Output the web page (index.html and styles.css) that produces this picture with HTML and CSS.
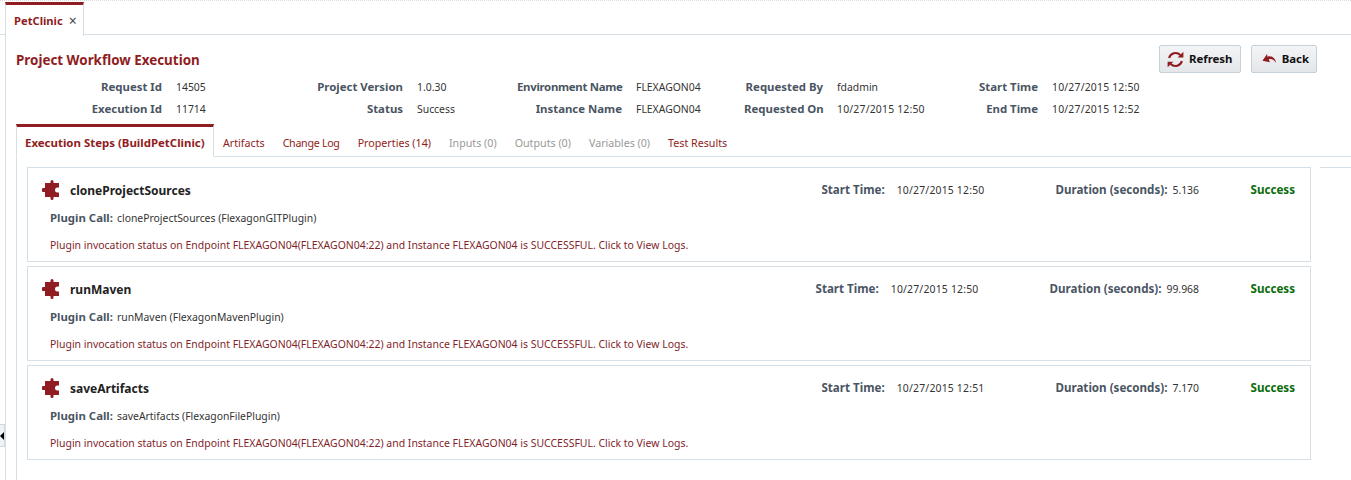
FILE: index.html
```html
<!DOCTYPE html>
<html lang="en">
<head>
<meta charset="utf-8">
<title>PetClinic</title>
<link rel="stylesheet" href="styles.css">
</head>
<body>
<div class="handle"><span class="handle-arrow"></span></div>
<nav class="top-tabs">
  <div class="top-tab"><span>PetClinic</span><span class="close">×</span></div>
</nav>
<main class="page">
  <header class="head">
    <h1>Project Workflow Execution</h1>
    <div class="actions">
      <button class="btn btn-refresh">
        <svg width="17" height="17" viewBox="0 0 16 16"><path d="M2 6.600A6.200 6.200 0 0 1 12.500 3.800" fill="none" stroke="#8f1d22" stroke-width="2"/><path d="M10 6h5.400V.6z" fill="#8f1d22"/><path d="M14 9.400A6.200 6.200 0 0 1 3.500 12.200" fill="none" stroke="#8f1d22" stroke-width="2"/><path d="M6 10H.6v5.400z" fill="#8f1d22"/></svg>
        Refresh
      </button>
      <button class="btn btn-back">
        <svg width="16" height="14" viewBox="0 0 16 14"><path d="M15.500 11.500C14.500 6 10.500 3 6 4.500L5.500 1.500.5 9l8 1.500-1-3.200c3-.8 5.800.8 8 4.200z" fill="#8f1d22"/></svg>
        Back
      </button>
    </div>
  </header>
  <section class="meta">
    <span class="k">Request Id</span><span class="v">14505</span>
    <span class="k">Project Version</span><span class="v">1.0.30</span>
    <span class="k tight">Environment Name</span><span class="v">FLEXAGON04</span>
    <span class="k">Requested By</span><span class="v">fdadmin</span>
    <span class="k">Start Time</span><span class="v date">10/27/2015 12:50</span>
    <span class="k">Execution Id</span><span class="v">11714</span>
    <span class="k">Status</span><span class="v">Success</span>
    <span class="k">Instance Name</span><span class="v">FLEXAGON04</span>
    <span class="k">Requested On</span><span class="v date">10/27/2015 12:50</span>
    <span class="k">End Time</span><span class="v date">10/27/2015 12:52</span>
  </section>
  <div class="tabs">
    <div class="tab active">Execution Steps (BuildPetClinic)</div>
    <div class="tab">Artifacts</div>
    <div class="tab tight">Change Log</div>
    <div class="tab">Properties (14)</div>
    <div class="tab off">Inputs (0)</div>
    <div class="tab off">Outputs (0)</div>
    <div class="tab off">Variables (0)</div>
    <div class="tab">Test Results</div>
  </div>
  <div class="tab-body">
    <article class="card">
      <div class="row-top">
        <svg class="puzzle" width="20" height="22" viewBox="0 0 20 22"><path d="M8.500 2.500a1.500 1.500 0 1 1 3 0V4H17v4.500h-1.500a2.500 2.500 0 0 0 0 5H17V18h-5.500v1.500a1.500 1.500 0 1 1-3 0V18H3v-5H1.500a2 2 0 0 1 0-4H3V4h5.500z" fill="#8f1d22"/></svg>
        <h2>cloneProjectSources</h2>
        <span class="k start">Start Time:</span><span class="v date time">10/27/2015 12:50</span>
        <span class="k">Duration (seconds):</span><span class="v">5.136</span>
        <span class="ok">Success</span>
      </div>
      <div class="row-call"><span class="k">Plugin Call:</span><span class="v">cloneProjectSources (FlexagonGITPlugin)</span></div>
      <div class="row-msg">Plugin invocation status on Endpoint FLEXAGON04(FLEXAGON04:22) and Instance FLEXAGON04 is SUCCESSFUL. Click to View Logs.</div>
    </article>
    <article class="card">
      <div class="row-top">
        <svg class="puzzle" width="20" height="22" viewBox="0 0 20 22"><path d="M8.500 2.500a1.500 1.500 0 1 1 3 0V4H17v4.500h-1.500a2.500 2.500 0 0 0 0 5H17V18h-5.500v1.500a1.500 1.500 0 1 1-3 0V18H3v-5H1.500a2 2 0 0 1 0-4H3V4h5.500z" fill="#8f1d22"/></svg>
        <h2>runMaven</h2>
        <span class="k start">Start Time:</span><span class="v date time">10/27/2015 12:50</span>
        <span class="k">Duration (seconds):</span><span class="v">99.968</span>
        <span class="ok">Success</span>
      </div>
      <div class="row-call"><span class="k">Plugin Call:</span><span class="v">runMaven (FlexagonMavenPlugin)</span></div>
      <div class="row-msg">Plugin invocation status on Endpoint FLEXAGON04(FLEXAGON04:22) and Instance FLEXAGON04 is SUCCESSFUL. Click to View Logs.</div>
    </article>
    <article class="card">
      <div class="row-top">
        <svg class="puzzle" width="20" height="22" viewBox="0 0 20 22"><path d="M8.500 2.500a1.500 1.500 0 1 1 3 0V4H17v4.500h-1.500a2.500 2.500 0 0 0 0 5H17V18h-5.500v1.500a1.500 1.500 0 1 1-3 0V18H3v-5H1.500a2 2 0 0 1 0-4H3V4h5.500z" fill="#8f1d22"/></svg>
        <h2>saveArtifacts</h2>
        <span class="k start">Start Time:</span><span class="v date time">10/27/2015 12:51</span>
        <span class="k">Duration (seconds):</span><span class="v">7.170</span>
        <span class="ok">Success</span>
      </div>
      <div class="row-call"><span class="k">Plugin Call:</span><span class="v">saveArtifacts (FlexagonFilePlugin)</span></div>
      <div class="row-msg">Plugin invocation status on Endpoint FLEXAGON04(FLEXAGON04:22) and Instance FLEXAGON04 is SUCCESSFUL. Click to View Logs.</div>
    </article>
  </div>
</main>
</body>
</html>
```
FILE: styles.css
```css
* { box-sizing: border-box; }
html, body { height: 480px; overflow: hidden; }
body {
  margin: 0;
  background: #fff;
  color: #333;
  font: 10.5px/14px "Noto Sans", sans-serif;
  position: relative;
}
.handle {
  position: absolute;
  left: 0;
  top: 424px;
  width: 5px;
  height: 23px;
  background: #f0f2f4;
  border: 1px solid #d0d8df;
  border-left: 0;
}
.handle-arrow {
  position: absolute;
  left: 0;
  top: 7px;
  border: 4px solid transparent;
  border-left: 0;
  border-right-color: #000;
}
.top-tabs {
  display: flex;
  height: 35px;
  padding-left: 5px;
  border-top: 1px dotted #ddd;
  border-bottom: 1px solid #d6dfe6;
}
.top-tab {
  width: 79px;
  height: 34px;
  margin-top: 1px;
  display: flex;
  align-items: center;
  gap: 6px;
  padding: 1px 0 0 8px;
  background: #fff;
  border-top: 3px solid #8f1d22;
  border-left: 1px solid #d6dfe6;
  border-right: 1px solid #d6dfe6;
  color: #8f1d22;
  font-size: 11.2px;
  font-weight: 700;
}
.close { color: #444; font-size: 14px; font-weight: 400; }
.page {
  height: 445px;
  margin-left: 5px;
  padding: 0 0 0 10px;
  border-left: 1px solid #d6dfe6;
}
.head {
  display: flex;
  justify-content: space-between;
  align-items: flex-start;
  height: 45px;
  padding: 10px 34px 0 0;
}
h1 {
  margin: 6px 0 0;
  color: #8f1d22;
  font-size: 13.4px;
  line-height: 18px;
  font-weight: 700;
}
.actions { display: flex; gap: 10px; }
.btn {
  height: 28px;
  display: flex;
  align-items: center;
  gap: 5px;
  padding: 0 7px;
  font: 700 11.4px/14px "Noto Sans", sans-serif;
  color: #111;
  background: linear-gradient(#f2f4f5, #e4e7ea);
  border: 1px solid #c5d0d9;
  border-radius: 2px;
}
.btn-refresh { width: 82px; }
.btn-back { width: 66px; padding-left: 10px; }
.meta {
  display: grid;
  grid-template-columns: 146px 112px 101px 86px 105px 94px 79px 127px 60px 98px;
  grid-auto-rows: 14px;
  column-gap: 14px;
  row-gap: 8px;
  align-content: start;
  height: 44px;
}
.meta .k { text-align: right; }
.meta .tight { letter-spacing: -.3px; }
.k { color: #4a5563; font-size: 11.4px; font-weight: 700; white-space: nowrap; }
.v { color: #333; font-size: 10.4px; white-space: nowrap; }
.date { letter-spacing: .2px; }
.tabs {
  display: flex;
  height: 33px;
  border-bottom: 1px solid #d6dfe6;
}
.tab {
  height: 32px;
  padding: 12px 9px 0;
  color: #8f1d22;
  font-size: 10.7px;
  white-space: nowrap;
}
.tab.tight { letter-spacing: -.3px; }
.tab.off { color: #999; }
.tab.active {
  height: 33px;
  width: 198px;
  padding: 9px 0 0 8px;
  font-size: 11.45px;
  font-weight: 700;
  background: #fff;
  border-top: 3px solid #8f1d22;
  border-left: 1px solid #d6dfe6;
  border-right: 1px solid #d6dfe6;
  border-bottom: 1px solid #fff;
}
.tab-body {
  height: 323px;
  padding: 10px 40px 0 10px;
  border-left: 1px solid #d6dfe6;
  background: linear-gradient(#d6dfe6, #d6dfe6) right 10px / 31px 1px no-repeat;
  display: flex;
  flex-direction: column;
  gap: 4px;
}
.card {
  height: 95px;
  padding: 10px 15px 0 14px;
  border: 1px solid #d6dfe6;
}
.row-top {
  display: flex;
  align-items: center;
  height: 24px;
  white-space: nowrap;
}
.puzzle { flex: none; margin-right: 8px; }
h2 {
  margin: 2px auto 0 0;
  color: #222;
  font-size: 12px;
  line-height: 16px;
  font-weight: 700;
}
.row-top .k { margin-right: 5px; font-size: 11.6px; }
.row-top .start { margin-right: 12px; }
.time { margin-right: 71px; }
.ok {
  width: 45px;
  margin-left: 51px;
  color: #0a6b0a;
  font-size: 11.6px;
  font-weight: 700;
  text-align: right;
}
.row-call { display: flex; gap: 4px; margin: 9px 0 0 8px; }
.row-msg { margin: 13px 0 0 8px; color: #7f1f2b; font-size: 10.46px; white-space: nowrap; }
```
